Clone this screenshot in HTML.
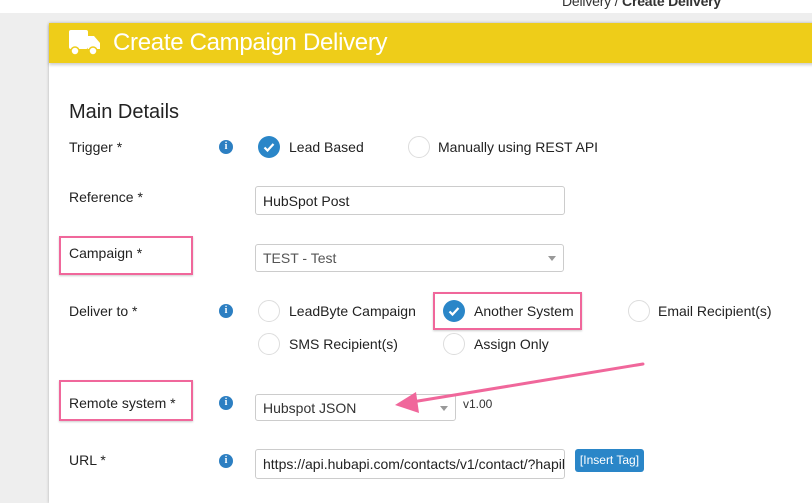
<!DOCTYPE html>
<html><head><style>
body{margin:0;width:812px;height:494px;overflow:hidden;background:#eeeeee;font-family:"Liberation Sans",sans-serif;position:relative;color:#222}
.a{position:absolute}
.top{left:0;top:0;width:812px;height:13px;background:#fff}
.card{left:49px;top:23px;width:780px;height:480px;background:#fff;box-shadow:0 0 3px rgba(0,0,0,.25)}
.hdr{left:49px;top:23px;width:780px;height:40px;background:#eecd19;box-shadow:0 2px 3px rgba(0,0,0,.2)}
.lbl{font-size:14px;left:69px;line-height:16px}
.info{width:14px;height:14px;border-radius:50%;background:#2c7fc2;color:#fff;font-size:10px;font-weight:bold;text-align:center;line-height:14px;font-family:"Liberation Serif",serif}
.r{width:20px;height:20px;border:1px solid #ddd;border-radius:50%;background:#fff}
.rc{width:22px;height:22px;border-radius:50%;background:#2a86c8}
.t{font-size:14px;line-height:16px}
.in{border:1px solid #ccc;border-radius:3px;background:#fff;font-size:14px;box-sizing:border-box;padding-left:7px}
.pink{border:2px solid #f0679b;box-sizing:border-box;box-shadow:0 1px 2px rgba(0,0,0,.2)}
.caret{width:0;height:0;border-left:4px solid transparent;border-right:4px solid transparent;border-top:5px solid #999}
</style></head><body>
<div class="a top"></div>
<div class="a" style="left:562px;top:-7px;font-size:14px;color:#333;letter-spacing:-0.2px">Delivery / <b>Create Delivery</b></div>
<div class="a card"></div>
<div class="a hdr"></div>
<svg class="a" style="left:69px;top:30px" width="32" height="26" viewBox="0 0 32 26"><rect x="0" y="0" width="19" height="19" rx="2" fill="#fff"/><path d="M19 6h6l6 7v6H19z" fill="#fff"/><circle cx="6" cy="21" r="4" fill="#fff" stroke="#eecd19" stroke-width="1.5"/><circle cx="24" cy="21" r="4" fill="#fff" stroke="#eecd19" stroke-width="1.5"/></svg>
<div class="a" style="left:113px;top:29px;font-size:24px;color:#fff;letter-spacing:-0.3px">Create Campaign Delivery</div>
<div class="a" style="left:69px;top:101px;font-size:20px;color:#222">Main Details</div>

<div class="a lbl" style="top:139px">Trigger *</div>
<div class="a info" style="left:219px;top:140px">i</div>
<div class="a rc" style="left:258px;top:136px"></div>
<svg class="a" style="left:258px;top:136px" width="22" height="22"><path d="M6.5 11.5l3 3 6-6.5" stroke="#fff" stroke-width="2.2" fill="none"/></svg>
<div class="a t" style="left:289px;top:139px">Lead Based</div>
<div class="a r" style="left:408px;top:136px"></div>
<div class="a t" style="left:438px;top:139px">Manually using REST API</div>

<div class="a lbl" style="top:189px">Reference *</div>
<div class="a in" style="left:255px;top:186px;width:310px;height:29px;line-height:28px;color:#222">HubSpot Post</div>

<div class="a pink" style="left:59px;top:236px;width:134px;height:39px"></div>
<div class="a lbl" style="top:245px">Campaign *</div>
<div class="a in" style="left:255px;top:244px;width:309px;height:28px;line-height:27px;color:#555">TEST - Test</div>
<div class="a caret" style="left:548px;top:256px"></div>

<div class="a lbl" style="top:303px">Deliver to *</div>
<div class="a info" style="left:219px;top:304px">i</div>
<div class="a r" style="left:258px;top:300px"></div>
<div class="a t" style="left:289px;top:303px">LeadByte Campaign</div>
<div class="a pink" style="left:433px;top:292px;width:149px;height:38px"></div>
<div class="a rc" style="left:443px;top:300px"></div>
<svg class="a" style="left:443px;top:300px" width="22" height="22"><path d="M6.5 11.5l3 3 6-6.5" stroke="#fff" stroke-width="2.2" fill="none"/></svg>
<div class="a t" style="left:474px;top:303px">Another System</div>
<div class="a r" style="left:628px;top:300px"></div>
<div class="a t" style="left:658px;top:303px">Email Recipient(s)</div>
<div class="a r" style="left:258px;top:333px"></div>
<div class="a t" style="left:289px;top:336px">SMS Recipient(s)</div>
<div class="a r" style="left:443px;top:333px"></div>
<div class="a t" style="left:474px;top:336px">Assign Only</div>

<div class="a pink" style="left:59px;top:380px;width:134px;height:41px"></div>
<div class="a lbl" style="top:395px">Remote system *</div>
<div class="a info" style="left:219px;top:396px">i</div>
<div class="a in" style="left:255px;top:394px;width:201px;height:27px;line-height:27px;color:#333">Hubspot JSON</div>
<div class="a caret" style="left:440px;top:406px"></div>
<div class="a" style="left:463px;top:397px;font-size:12px;color:#333">v1.00</div>

<div class="a lbl" style="top:452px">URL *</div>
<div class="a info" style="left:219px;top:454px">i</div>
<div class="a in" style="left:255px;top:449px;width:310px;height:30px;line-height:29px;color:#222;overflow:hidden;white-space:nowrap;padding-right:4px">https://api.hubapi.com/contacts/v1/contact/?hapikey</div>
<div class="a" style="left:575px;top:449px;width:69px;height:23px;background:#2a86c8;border-radius:3px;color:#fff;font-size:12px;text-align:center;line-height:22px">[Insert Tag]</div>

<svg class="a" style="left:0;top:0" width="812" height="494"><line x1="643" y1="364" x2="412" y2="402" stroke="#f0679b" stroke-width="3" stroke-linecap="round"/><path d="M395 405 L416 392 L419 413 Z" fill="#f0679b"/></svg>
</body></html>
